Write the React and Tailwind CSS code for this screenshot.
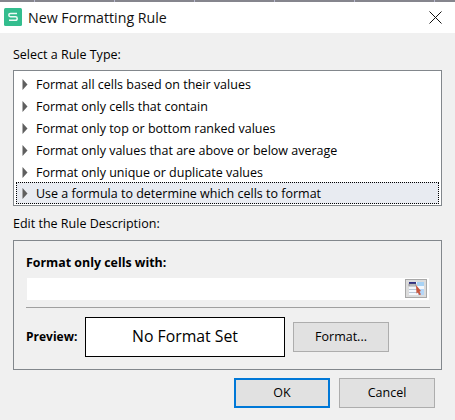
import React from "react";

const rules = [
  "Format all cells based on their values",
  "Format only cells that contain",
  "Format only top or bottom ranked values",
  "Format only values that are above or below average",
  "Format only unique or duplicate values",
  "Use a formula to determine which cells to format",
];

const font = { fontFamily: '"Open Sans", "Noto Sans", sans-serif' };

const Arrow = () => (
  <svg width="6" height="11" viewBox="0 0 6 11" className="shrink-0 -mt-[2px]">
    <path d="M0.5 0 L5.5 5.5 L0.5 11 Z" fill="#5f5f5f" />
  </svg>
);

const Logo = () => (
  <svg width="18" height="18" viewBox="0 0 18 18" className="shrink-0 -mt-px">
    <rect width="18" height="18" rx="1.5" fill="#33bd8e" />
    <path d="M13 5.5 H6.5 Q4.8 5.5 4.8 7.1 Q4.8 8.7 6.5 8.7 H11.5 Q13.2 8.7 13.2 10.4 Q13.2 12.2 11.5 12.2 H5" fill="none" stroke="#eefbf6" strokeWidth="1.5" />
  </svg>
);

const RangeIcon = () => (
  <svg width="22" height="19" viewBox="0 0 22 19">
    <rect x="0.5" y="0.5" width="21" height="18" fill="#dcdcdc" stroke="#a8a8a8" />
    <rect x="4" y="3" width="15" height="13" fill="#f4f8fd" />
    <rect x="4" y="3" width="7" height="2" fill="#2f2f86" />
    <rect x="4" y="5" width="7" height="2" fill="#d8d8d8" stroke="#6f6f74" strokeWidth="0.6" />
    <rect x="12" y="3" width="7" height="4" fill="#a9d3f5" />
    <rect x="13" y="10" width="6" height="6" fill="#b5d6f7" />
    <path d="M4 10.5 H12 M4 13.5 H12" stroke="#b9c6d6" />
    <path d="M11 6 L16 12 L14.5 12.5 L16 15.5 L14 16 L13 13.5 L11.5 14.5 Z" fill="#c8553c" />
  </svg>
);

const Btn = ({ children, primary }) => (
  <button
    className={
      primary
        ? "w-[96px] h-[30px] bg-[#e1e1e1] border-2 border-[#0078d7] text-[12.5px] text-black"
        : "w-[96px] h-[30px] bg-[#e1e1e1] border border-[#adadad] text-[12.5px] text-black"
    }
  >
    {children}
  </button>
);

export default function App() {
  return (
    <div className="w-[455px] h-[420px] flex flex-col bg-[#f0f0f0] overflow-hidden text-[12.5px] text-black" style={font}>
      {/* strip of the sheet behind the dialog */}
      <div className="h-[2px] bg-[#85858d] flex pl-[34px] gap-[79px] shrink-0">
        {[0, 1, 2, 3, 4, 5].map((n) => (
          <div key={n} className="w-px bg-[#b8b8d0]" />
        ))}
      </div>
      <div className="h-[31px] bg-white flex items-center pl-[4px] pr-[13px] shrink-0">
        <Logo />
        <span className="ml-[6px] text-[14.2px] text-[#111]">New Formatting Rule</span>
        <svg width="13" height="13" viewBox="0 0 13 13" className="ml-auto">
          <path d="M0.5 0.5 L12.5 12.5 M12.5 0.5 L0.5 12.5" stroke="#111" strokeWidth="1" fill="none" />
        </svg>
      </div>

      <div className="flex-1 px-[13px] flex flex-col">
        <div className="mt-[14px] leading-[16px] h-[16px]">Select a Rule Type:</div>
        <div className="mt-[7px] h-[136px] bg-white border border-[#82878c] pt-[3px] px-[2px]">
          {rules.map((r, i) => (
            <div
              key={r}
              className={
                i === 5
                  ? "h-[22px] flex items-center gap-[8px] pl-[5px] pt-[2px] bg-[#e8ebf1] border border-dotted border-black -mt-[2px]"
                  : "h-[22px] flex items-center gap-[8px] pl-[6px]"
              }
            >
              <Arrow />
              <span className="whitespace-nowrap">{r}</span>
            </div>
          ))}
        </div>

        <div className="mt-[10px] leading-[16px] h-[16px]">Edit the Rule Description:</div>
        <div className="mt-[8px] h-[130px] border border-[#82878c] pl-[12px] pr-[11px] flex flex-col">
          <div className="mt-[14px] h-[16px] leading-[16px] font-bold text-[12.4px]">Format only cells with:</div>
          <div className="mt-[7px] h-[22px] ml-[1px] mr-[1px] bg-white flex items-start justify-end pr-[2px] pt-[1px]">
            <RangeIcon />
          </div>
          <div className="mt-[7px] h-px bg-[#a0a0a0]" />
          <div className="mt-[9px] flex items-center">
            <span className="w-[59px] font-bold text-[12px]">Preview:</span>
            <div className="w-[200px] h-[40px] bg-white border border-black flex items-center justify-center text-[15.8px]">
              No Format Set
            </div>
            <div className="ml-[8px]">
              <Btn>Format...</Btn>
            </div>
          </div>
        </div>

        <div className="mt-[8px] flex justify-end gap-[9px] pr-[7px]">
          <Btn primary>OK</Btn>
          <Btn>Cancel</Btn>
        </div>
      </div>
    </div>
  );
}
